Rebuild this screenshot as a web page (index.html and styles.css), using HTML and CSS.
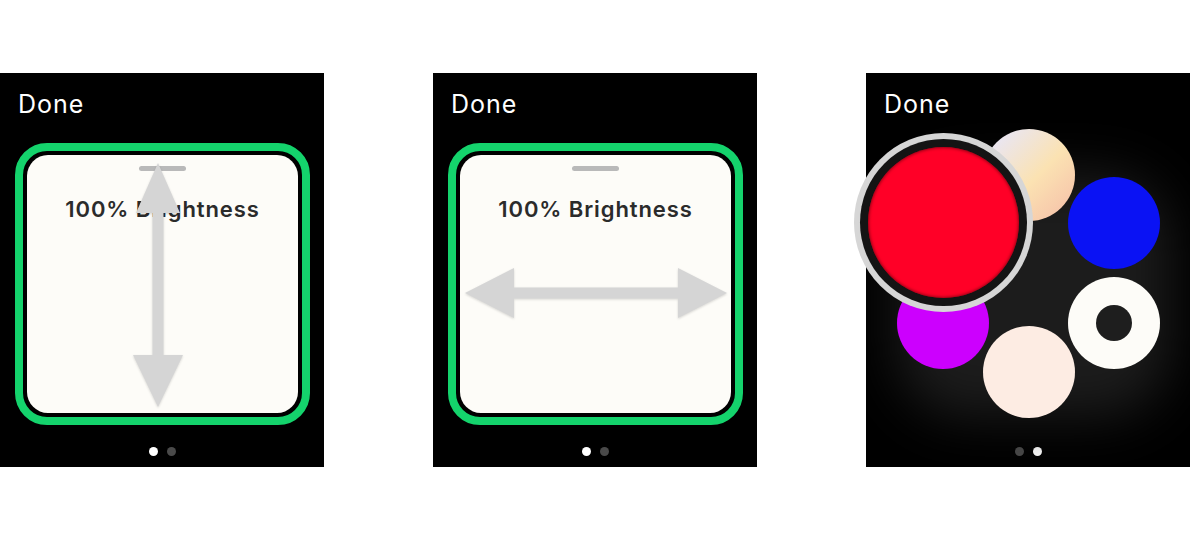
FILE: index.html
```html
<!DOCTYPE html>
<html lang="en">
<head>
    <meta charset="UTF-8">
    <meta name="viewport" content="width=device-width, initial-scale=1.0">
    <title>Brightness and colour</title>
    <link rel="stylesheet" href="styles.css">
</head>
<body>
    <div class="row">
        <!-- swipe up / down -->
        <div class="watch">
            <div class="done">Done</div>
            <div class="frame">
                <div class="card">
                    <div class="handle"></div>
                    <div class="title">100% Brightness</div>
                    <svg class="arrow" viewBox="0 0 271 258" width="271" height="258">
                        <polygon points="131,8 153,58 136.5,58 136.5,200 156,200 131,252 106,200 125.5,200 125.5,58 109,58"/>
                    </svg>
                </div>
            </div>
            <div class="dots"><span class="dot on"></span><span class="dot"></span></div>
        </div>

        <!-- swipe left / right -->
        <div class="watch">
            <div class="done">Done</div>
            <div class="frame">
                <div class="card">
                    <div class="handle"></div>
                    <div class="title">100% Brightness</div>
                    <svg class="arrow" viewBox="0 0 271 258" width="271" height="258">
                        <polygon points="5,138 54,113 54,132.5 218,132.5 218,113 267,138 218,163 218,143.5 54,143.5 54,163"/>
                    </svg>
                </div>
            </div>
            <div class="dots"><span class="dot on"></span><span class="dot"></span></div>
        </div>

        <!-- colour picker -->
        <div class="watch">
            <div class="glow-clip"><div class="glow"></div></div>
            <div class="done">Done</div>
            <div class="colors">
                <div class="swatch peach"></div>
                <div class="swatch blue"></div>
                <div class="swatch purple"></div>
                <div class="swatch cream"></div>
                <div class="swatch ring"><span class="hole"></span></div>
                <div class="picked"><div class="picked-inner"><div class="picked-red"></div></div></div>
            </div>
            <div class="dots"><span class="dot"></span><span class="dot on"></span></div>
        </div>
    </div>
</body>
</html>
```

FILE: styles.css
```css
body {
    margin: 0;
    background-color: #ffffff;
    font-family: Inter, "Noto Sans", sans-serif;
}
.row {
    display: flex;
    gap: 109px;
    padding-top: 73px;
}
.watch {
    position: relative;
    width: 324px;
    height: 394px;
    background-color: #000000;
    padding-top: 16px;
    box-sizing: border-box;
}
.done {
    position: relative;
    margin-left: 18px;
    color: #ffffff;
    font-size: 25px;
    line-height: 30px;
    letter-spacing: 1px;
}
.frame {
    width: 295px;
    height: 282px;
    margin: 24px 0 0 15px;
    box-sizing: border-box;
    border: 8px solid #14d36c;
    border-radius: 32px;
    padding: 4px;
    background-color: #000000;
}
.card {
    position: relative;
    height: 100%;
    background-color: #fdfcf8;
    border-radius: 21px;
    overflow: hidden;
}
.handle {
    width: 47px;
    height: 5px;
    margin: 11px auto 0;
    border-radius: 3px;
    background-color: #b9b9b9;
}
.title {
    margin-top: 25px;
    text-align: center;
    font-size: 22px;
    line-height: 26px;
    font-weight: 600;
    letter-spacing: 0.9px;
    color: #2b2b2b;
}
.arrow {
    position: absolute;
    left: 0;
    top: 0;
    fill: #d5d5d5;
    filter: drop-shadow(0 1px 1px rgba(0, 0, 0, 0.15));
}
.dots {
    display: flex;
    justify-content: center;
    gap: 9px;
    margin-top: 22px;
}
.dot {
    width: 9px;
    height: 9px;
    border-radius: 50%;
    background-color: #4a4a4a;
}
.dot.on {
    background-color: #ffffff;
}

/* colour picker */
.glow-clip {
    position: absolute;
    inset: 0;
    overflow: hidden;
}
.glow {
    position: absolute;
    left: 30px;
    top: 100px;
    right: 20px;
    bottom: 50px;
    border-radius: 70px;
    background-color: #1c1c1c;
    filter: blur(26px);
}
.colors {
    position: relative;
    height: 282px;
    margin-top: 24px;
}
.swatch {
    position: absolute;
    width: 92px;
    height: 92px;
    border-radius: 50%;
}
.peach {
    left: 117px;
    top: -14px;
    background: linear-gradient(135deg, #e9e6f4 12%, #fbe2b2 55%, #f6c3aa 92%);
}
.blue {
    left: 202px;
    top: 34px;
    background-color: #0a12f4;
}
.purple {
    left: 31px;
    top: 134px;
    background-color: #cc00fe;
}
.cream {
    left: 117px;
    top: 183px;
    background-color: #fdece3;
}
.ring {
    left: 202px;
    top: 134px;
    background-color: #fdfcf8;
    display: flex;
    align-items: center;
    justify-content: center;
}
.hole {
    width: 36px;
    height: 36px;
    border-radius: 50%;
    background-color: #1e1e1e;
}
.picked {
    position: absolute;
    left: -12px;
    top: -10px;
    width: 179px;
    height: 179px;
    box-sizing: border-box;
    padding: 6px;
    border-radius: 50%;
    background-color: #d6d6d6;
}
.picked-inner {
    height: 100%;
    box-sizing: border-box;
    padding: 8px;
    border-radius: 50%;
    background-color: #141414;
}
.picked-red {
    height: 100%;
    border-radius: 50%;
    background-color: #ff0027;
    box-shadow: inset 0 0 3px 1px rgba(90, 0, 10, 0.6);
}
```
